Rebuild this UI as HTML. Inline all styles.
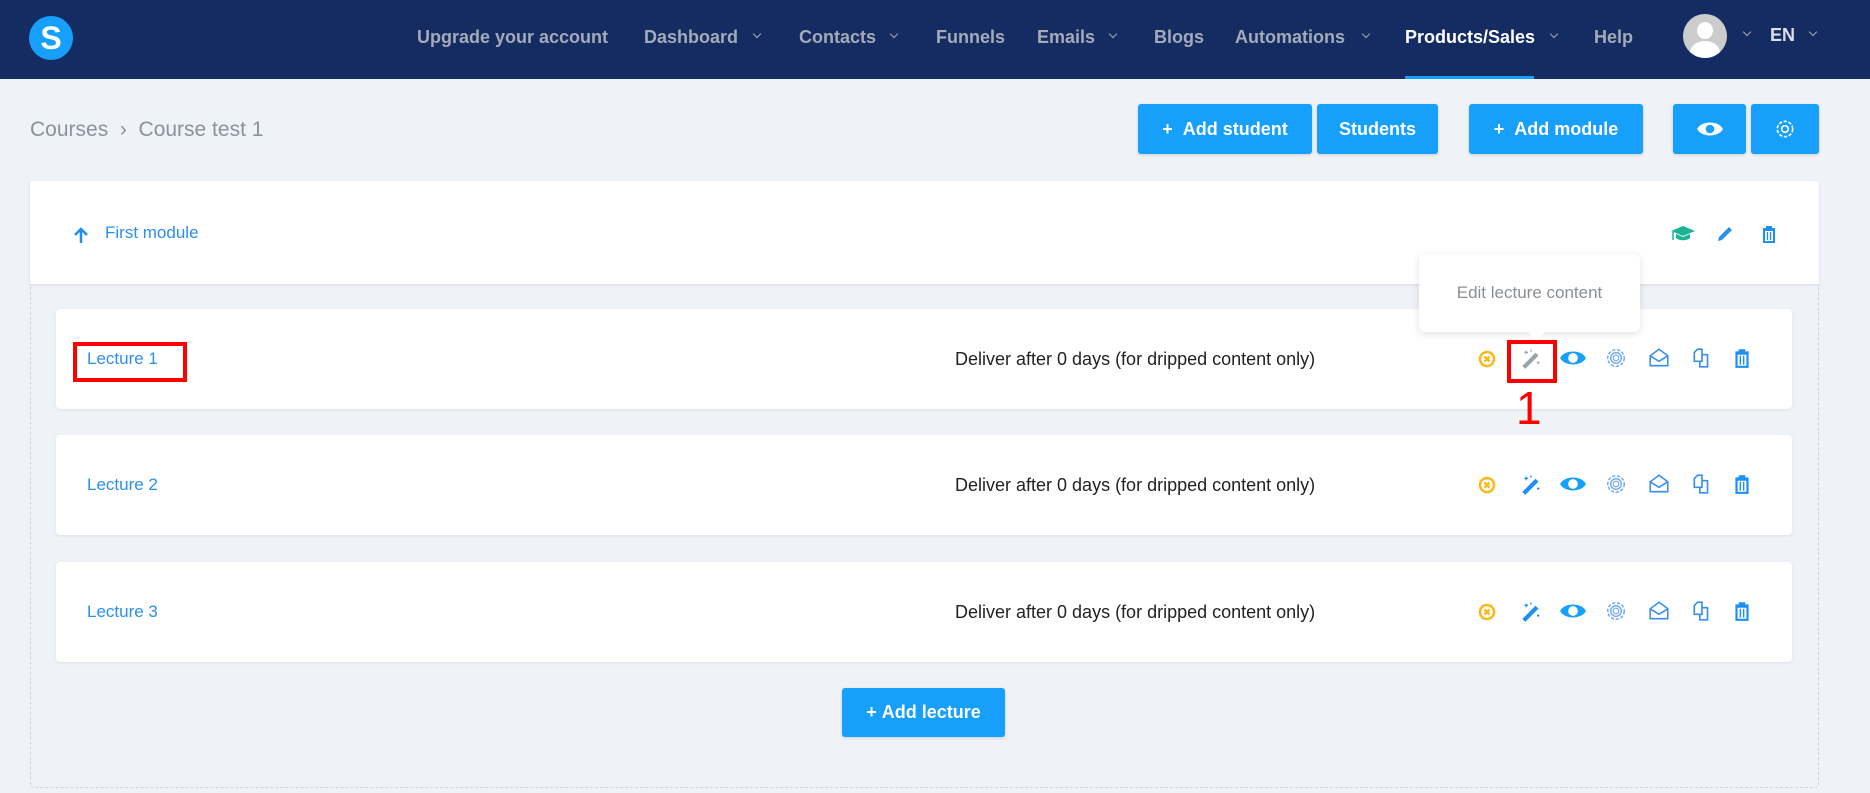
<!DOCTYPE html>
<html><head><meta charset="utf-8"><style>
*{box-sizing:border-box;margin:0;padding:0}
body{width:1870px;height:793px;background:#eff2f7;font-family:"Liberation Sans",sans-serif;position:relative;overflow:hidden}
.a{position:absolute}
nav{position:absolute;left:0;top:0;width:1870px;height:79px;background:#152c63}
.ni{position:absolute;top:27px;font-size:18px;font-weight:bold;color:#a3aab8;white-space:nowrap}
.car{position:absolute;top:31px;width:6px;height:6px;border-right:1.5px solid #a3aab8;border-bottom:1.5px solid #a3aab8;transform:rotate(45deg)}
.btn{position:absolute;top:104px;height:50px;background:#16a0fb;border-radius:3px;color:#fff;font-weight:bold;font-size:18px;display:flex;align-items:center;justify-content:center;box-shadow:0 1px 3px rgba(0,0,0,.15)}
.card{position:absolute;left:56px;width:1736px;height:100px;background:#fff;border-radius:4px;box-shadow:0 1px 3px rgba(0,0,0,.08)}
.lt{position:absolute;left:31px;top:40px;font-size:17px;color:#2b8ff0}
.dl{position:absolute;left:899px;top:40px;font-size:18px;color:#222}
.ic{position:absolute;top:38px}
</style></head><body>
<svg width="0" height="0" style="position:absolute">
<defs>
<symbol id="x" viewBox="0 0 20 20"><circle cx="10" cy="10" r="7" fill="none" stroke="#fbb81b" stroke-width="2.5"/><path d="M7.5 7.5l5 5M12.5 7.5l-5 5" stroke="#fbb81b" stroke-width="2.5"/></symbol>
<symbol id="w" viewBox="0 0 20 20"><path d="M4 17L15 6" stroke="currentColor" stroke-width="3.5"/><path d="M6 3v3M4.5 4.5h3M16 12v2M15 13h2M10 2v2" stroke="currentColor" stroke-width="1"/></symbol>
<symbol id="e" viewBox="0 0 26 20"><path d="M1 10C5 2 21 2 25 10C21 18 5 18 1 10Z" fill="#16a0fb"/><circle cx="13" cy="10" r="4.5" fill="#fff"/></symbol>
<symbol id="g" viewBox="0 0 20 20"><circle cx="10" cy="10" r="7.5" fill="none" stroke="#6aa6f5" stroke-width="1.3" stroke-dasharray="3 1.5"/><circle cx="10" cy="10" r="4.8" fill="none" stroke="#6aa6f5" stroke-width="1.2"/><circle cx="10" cy="10" r="2.6" fill="none" stroke="#6aa6f5" stroke-width="1"/></symbol>
<symbol id="m" viewBox="0 0 20 20"><path d="M2 8L10 2L18 8V17H2Z M2 8L10 13L18 8" fill="none" stroke="#3a8ef0" stroke-width="1.4"/></symbol>
<symbol id="c" viewBox="0 0 20 20"><path d="M3 5L6 2H10V13H3Z M10 7H15V18H8V13" fill="none" stroke="#3a8ef0" stroke-width="1.5"/></symbol>
<symbol id="t" viewBox="0 0 20 20"><path d="M4 5H16M8 5V3H12V5M5 6H15V18H5Z" fill="none" stroke="#1e8ff5" stroke-width="2"/><path d="M8.5 8v8M11.5 8v8" stroke="#1e8ff5" stroke-width="1.3"/></symbol>
</defs></svg>

<nav>
<div class="a" style="left:29px;top:16px;width:44px;height:44px;border-radius:50%;background:#16a0fb;color:#fff;font-weight:bold;font-size:32px;text-align:center;line-height:44px">S</div>
<div class="ni" style="left:417px">Upgrade your account</div>
<div class="ni" style="left:644px">Dashboard</div><div class="car" style="left:754px"></div>
<div class="ni" style="left:799px">Contacts</div><div class="car" style="left:891px"></div>
<div class="ni" style="left:936px">Funnels</div>
<div class="ni" style="left:1037px">Emails</div><div class="car" style="left:1110px"></div>
<div class="ni" style="left:1154px">Blogs</div>
<div class="ni" style="left:1235px">Automations</div><div class="car" style="left:1363px"></div>
<div class="ni" style="left:1405px;color:#fff">Products/Sales</div><div class="car" style="left:1551px"></div>
<div class="a" style="left:1405px;top:76px;width:129px;height:3px;background:#16a0fb"></div>
<div class="ni" style="left:1594px">Help</div>
<div class="a" style="left:1683px;top:14px;width:44px;height:44px;border-radius:50%;background:#ccc;overflow:hidden"><div class="a" style="left:14px;top:8px;width:16px;height:17px;border-radius:50%;background:#fff"></div><div class="a" style="left:7px;top:27px;width:30px;height:24px;border-radius:50%;background:#fff"></div></div>
<div class="car" style="left:1744px;top:29px"></div>
<div class="ni" style="left:1770px;top:25px;color:#dde">EN</div><div class="car" style="left:1810px;top:29px"></div>
</nav>

<div class="a" style="left:30px;top:118px;font-size:21px;color:#8a929c">Courses &nbsp;›&nbsp; Course test 1</div>
<div class="btn" style="left:1138px;width:174px">+&nbsp;&nbsp;Add student</div>
<div class="btn" style="left:1317px;width:121px">Students</div>
<div class="btn" style="left:1469px;width:174px">+&nbsp;&nbsp;Add module</div>
<div class="btn" style="left:1673px;width:73px"><svg width="28" height="22" viewBox="0 0 26 20"><path d="M1 10C5 2 21 2 25 10C21 18 5 18 1 10Z" fill="#fff"/><circle cx="13" cy="10" r="4" fill="#16a0fb"/></svg></div>
<div class="btn" style="left:1751px;width:68px"><svg width="22" height="22" viewBox="0 0 20 20"><circle cx="10" cy="10" r="7" fill="none" stroke="#fff" stroke-width="1.5" stroke-dasharray="3 1.5"/><circle cx="10" cy="10" r="3" fill="none" stroke="#fff" stroke-width="1.5"/></svg></div>

<div class="a" style="left:30px;top:181px;width:1789px;height:607px;border:1px dashed #ccd3dc;border-radius:4px"></div>
<div class="a" style="left:30px;top:181px;width:1789px;height:103px;background:#fff;box-shadow:0 1px 3px rgba(0,0,0,.1)"></div>
<svg class="a" style="left:73px;top:226px" width="16" height="18" viewBox="0 0 16 18"><path d="M8 17V3M2 9L8 3L14 9" fill="none" stroke="#1e8ff5" stroke-width="2.5"/></svg>
<div class="a" style="left:105px;top:223px;font-size:17px;color:#2b8ff0">First module</div>
<svg class="a" style="left:1670px;top:224px" width="26" height="20" viewBox="0 0 26 20"><path d="M1 7L13 2L25 7L13 12Z" fill="#1ab394"/><path d="M6 10V14C9 17 17 17 20 14V10L13 13Z" fill="#1ab394"/><path d="M3 8V16" stroke="#1ab394" stroke-width="1.5"/></svg>
<svg class="a" style="left:1715px;top:224px" width="20" height="20" viewBox="0 0 20 20"><path d="M3 17L4 13L14 3L17 6L7 16Z" fill="#2b8ff0"/></svg>
<svg class="a" style="left:1759px;top:224px" width="20" height="20"><use href="#t"/></svg>

<div class="card" style="top:309px">
<div class="lt">Lecture 1</div><div class="dl">Deliver after 0 days (for dripped content only)</div>
<svg class="ic" style="left:1421px;top:40px" width="20" height="20"><use href="#x"/></svg>
<svg class="ic" style="left:1463px;color:#9aa3ac" width="24" height="24"><use href="#w"/></svg>
<svg class="ic" style="left:1503px" width="28" height="22"><use href="#e"/></svg>
<svg class="ic" style="left:1549px" width="22" height="22"><use href="#g"/></svg>
<svg class="ic" style="left:1591px" width="24" height="22"><use href="#m"/></svg>
<svg class="ic" style="left:1635px" width="22" height="22"><use href="#c"/></svg>
<svg class="ic" style="left:1675px" width="22" height="22"><use href="#t"/></svg>
</div>
<div class="card" style="top:435px">
<div class="lt">Lecture 2</div><div class="dl">Deliver after 0 days (for dripped content only)</div>
<svg class="ic" style="left:1421px;top:40px" width="20" height="20"><use href="#x"/></svg>
<svg class="ic" style="left:1463px;color:#1e8ff5" width="24" height="24"><use href="#w"/></svg>
<svg class="ic" style="left:1503px" width="28" height="22"><use href="#e"/></svg>
<svg class="ic" style="left:1549px" width="22" height="22"><use href="#g"/></svg>
<svg class="ic" style="left:1591px" width="24" height="22"><use href="#m"/></svg>
<svg class="ic" style="left:1635px" width="22" height="22"><use href="#c"/></svg>
<svg class="ic" style="left:1675px" width="22" height="22"><use href="#t"/></svg>
</div>
<div class="card" style="top:562px">
<div class="lt">Lecture 3</div><div class="dl">Deliver after 0 days (for dripped content only)</div>
<svg class="ic" style="left:1421px;top:40px" width="20" height="20"><use href="#x"/></svg>
<svg class="ic" style="left:1463px;color:#1e8ff5" width="24" height="24"><use href="#w"/></svg>
<svg class="ic" style="left:1503px" width="28" height="22"><use href="#e"/></svg>
<svg class="ic" style="left:1549px" width="22" height="22"><use href="#g"/></svg>
<svg class="ic" style="left:1591px" width="24" height="22"><use href="#m"/></svg>
<svg class="ic" style="left:1635px" width="22" height="22"><use href="#c"/></svg>
<svg class="ic" style="left:1675px" width="22" height="22"><use href="#t"/></svg>
</div>

<div class="a" style="left:73px;top:342px;width:114px;height:40px;border:4px solid #f00"></div>
<div class="a" style="left:1507px;top:340px;width:50px;height:43px;border:4px solid #f00"></div>
<div class="a" style="left:1516px;top:385px;font-size:46px;color:#f00;line-height:1">1</div>

<div class="a" style="left:1419px;top:254px;width:221px;height:78px;background:#fff;border-radius:6px;box-shadow:0 2px 8px rgba(0,0,0,.12);font-size:17px;color:#8a8f96;text-align:center;line-height:78px">Edit lecture content</div>
<div class="a" style="left:1531px;top:326px;width:12px;height:12px;background:#fff;transform:rotate(45deg)"></div>

<div class="btn" style="left:842px;top:688px;width:163px;height:49px">+&nbsp;Add lecture</div>
</body></html>
